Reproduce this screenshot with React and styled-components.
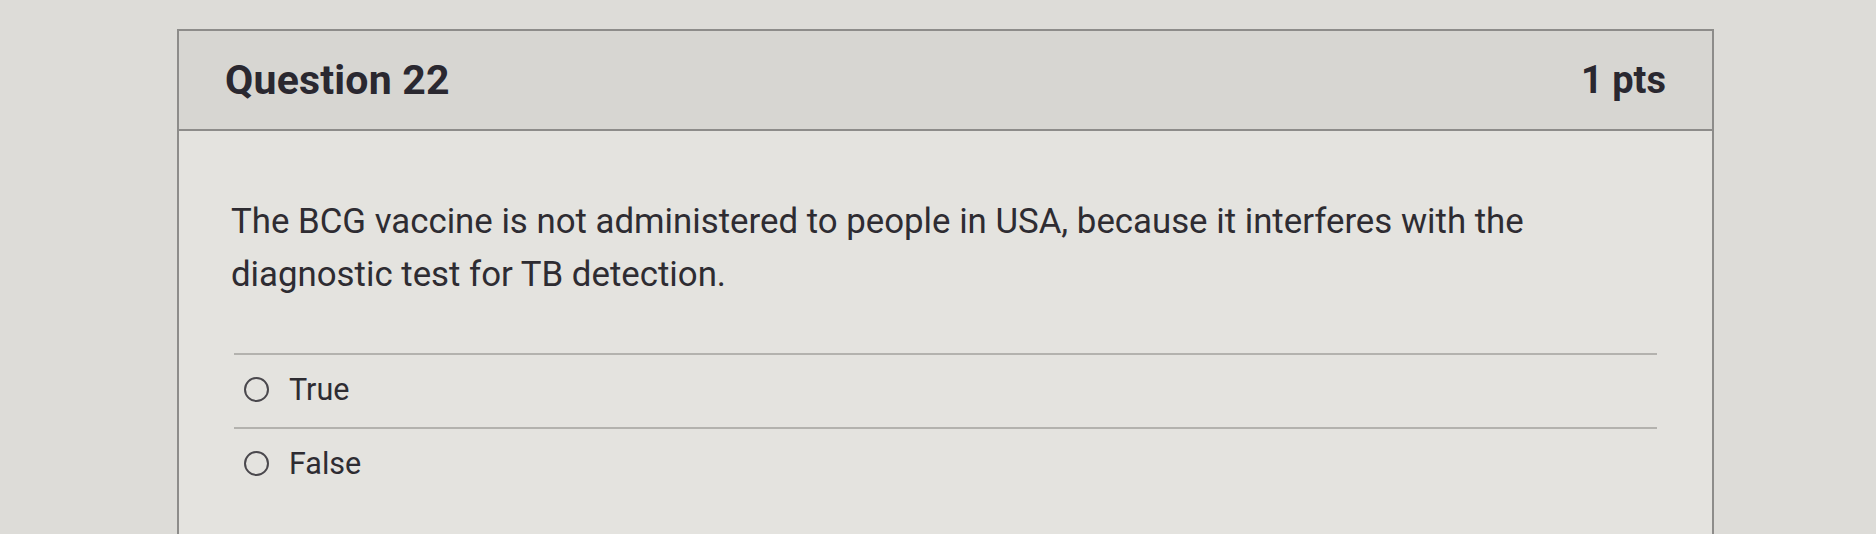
import React from 'react';
import styled, {createGlobalStyle} from 'styled-components';

const Global = createGlobalStyle`
  html, body {
    margin: 0;
    padding: 0;
    background: #dddcd8;
    overflow: hidden;
  }
  body {
    font-family: Roboto, 'Liberation Sans', sans-serif;
    -webkit-font-smoothing: antialiased;
  }
`;

const Page = styled.div`
  width: 1876px;
  height: 534px;
  padding: 29px 0 0 177px;
  box-sizing: border-box;
`;

const Card = styled.div`
  width: 1537px;
  height: 600px;
  border: 2px solid #8d8c8a;
  border-bottom: none;
  background: #e4e3df;
  box-sizing: border-box;
`;

const Header = styled.header`
  height: 100px;
  display: flex;
  align-items: center;
  justify-content: space-between;
  padding: 0 46px;
  background: #d7d6d2;
  border-bottom: 2px solid #8d8c8a;
  box-sizing: border-box;
  color: #2a2830;
`;

const Title = styled.h2`
  margin: 0;
  font-size: 41px;
  font-weight: 700;
  letter-spacing: 0.2px;
`;

const Points = styled.span`
  font-size: 38px;
  font-weight: 700;
`;

const Body = styled.div`
  padding: 64px 55px 0 52px;
  color: #2e2c32;
`;

const Text = styled.p`
  margin: 0 0 52px;
  font-size: 34.8px;
  line-height: 53px;
`;

const Answers = styled.div`
  display: flex;
  flex-direction: column;
  margin-left: 3px;
`;

const Answer = styled.label`
  display: flex;
  align-items: center;
  gap: 20px;
  height: 74px;
  padding-left: 10px;
  padding-bottom: 3px;
  box-sizing: border-box;
  border-top: ${p => (p.$line ? '2px solid #b3b2ae' : 'none')};
  font-size: 30.5px;
`;

const Radio = styled.span`
  width: 21px;
  height: 21px;
  border: 2.5px solid #4a484d;
  border-radius: 50%;
  flex-shrink: 0;
`;

const App = () => {
  return (
    <Page>
      <Global />
      <Card>
        <Header>
          <Title>Question 22</Title>
          <Points>1 pts</Points>
        </Header>
        <Body>
          <Text>
            The BCG vaccine is not administered to people in USA, because it interferes with the
            <br />
            diagnostic test for TB detection.
          </Text>
          <Answers>
            <Answer $line>
              <Radio />
              True
            </Answer>
            <Answer $line>
              <Radio />
              False
            </Answer>
          </Answers>
        </Body>
      </Card>
    </Page>
  );
};

export default App;
